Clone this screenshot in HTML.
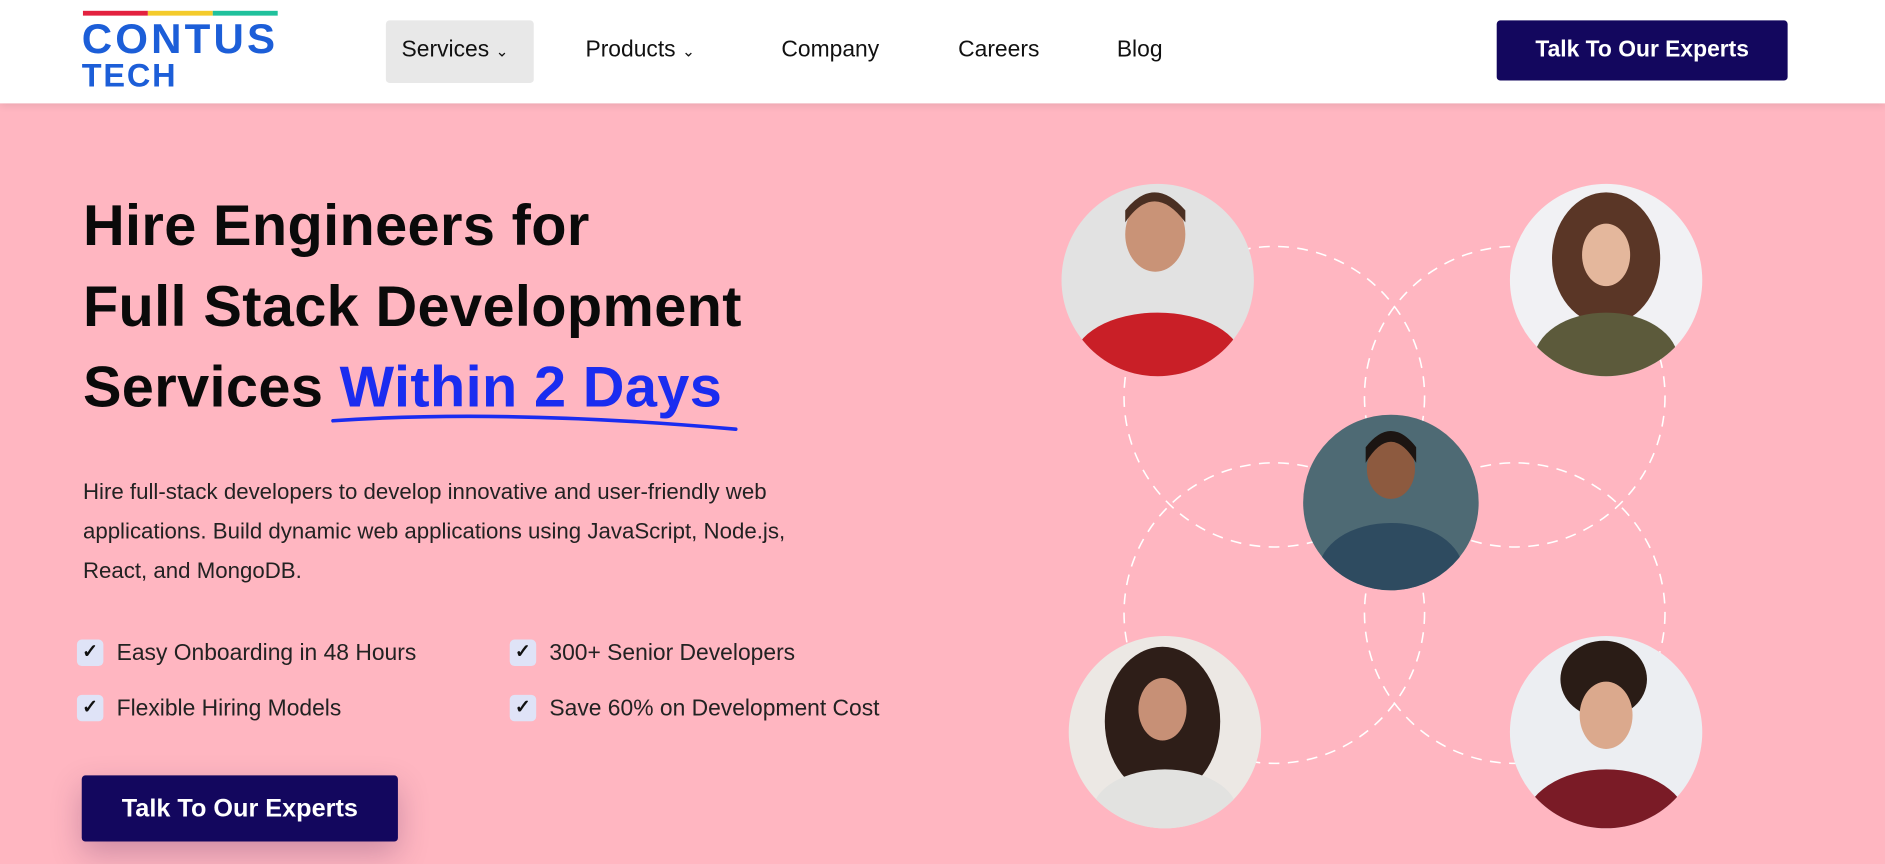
<!DOCTYPE html>
<html><head><meta charset="utf-8"><style>
*{margin:0;padding:0;box-sizing:border-box}
html,body{width:1885px;height:864px;overflow:hidden;background:#ffb6c1}
#w{width:1568px;height:719px;transform:scale(1.20217);transform-origin:0 0;position:relative;font-family:"Liberation Sans",sans-serif;background:#ffb6c1}
.nav{position:absolute;left:0;top:0;width:1568px;height:86px;background:#fff;box-shadow:0 2px 6px rgba(0,0,0,.08)}
.a{position:absolute}
.nl{position:absolute;top:31px;font-size:19px;color:#111}
.btn{position:absolute;background:#13075e;color:#fff;font-weight:bold;display:flex;align-items:center;justify-content:center;border-radius:3px}
h1{position:absolute;left:69px;top:155px;font-size:48px;line-height:67px;font-weight:bold;color:#0a0a0a;letter-spacing:0.3px}
.p{position:absolute;left:69px;top:392px;width:640px;font-size:18.5px;line-height:33px;color:#222}
.ck{position:absolute;width:22px;height:22px;background:#dfe3f7;border-radius:4px;font-size:16px;font-weight:bold;text-align:center;line-height:22px;color:#111}
.ct{position:absolute;font-size:19px;color:#222}
</style></head><body><div id="w">
<div class="nav">
 <div class="a" style="left:69px;top:9px;width:54px;height:4px;background:#e3213f"></div>
 <div class="a" style="left:123px;top:9px;width:54px;height:4px;background:#f4cb2b"></div>
 <div class="a" style="left:177px;top:9px;width:54px;height:4px;background:#1fc19c"></div>
 <div class="a" style="left:68px;top:14px;font-size:35px;font-weight:bold;color:#1c5ed8;letter-spacing:2.6px;line-height:38px">CONTUS</div>
 <div class="a" style="left:68px;top:48px;font-size:27px;font-weight:bold;color:#1c5ed8;letter-spacing:1.5px;line-height:30px">TECH</div>
 <div class="a" style="left:321px;top:17px;width:123px;height:52px;background:#e8e8e8;border-radius:3px"></div>
 <div class="nl" style="left:334px">Services <span style="font-size:13px">&#8964;</span></div>
 <div class="nl" style="left:487px">Products <span style="font-size:13px">&#8964;</span></div>
 <div class="nl" style="left:650px">Company</div>
 <div class="nl" style="left:797px">Careers</div>
 <div class="nl" style="left:929px">Blog</div>
 <div class="btn" style="left:1245px;top:17px;width:242px;height:50px;font-size:19px">Talk To Our Experts</div>
</div>
<h1>Hire Engineers for<br>Full Stack Development<br>Services <span style="color:#1a2cf0">Within 2 Days</span></h1>
<svg class="a" style="left:270px;top:340px" width="350" height="25"><path d="M7 10 Q 150 0 342 17" stroke="#1a2cf0" stroke-width="3" fill="none" stroke-linecap="round"/></svg>
<div class="p">Hire full-stack developers to develop innovative and user-friendly web applications. Build dynamic web applications using JavaScript, Node.js, React, and MongoDB.</div>
<div class="ck" style="left:64px;top:532px">✓</div><div class="ct" style="left:97px;top:533px">Easy Onboarding in 48 Hours</div>
<div class="ck" style="left:424px;top:532px">✓</div><div class="ct" style="left:457px;top:533px">300+ Senior Developers</div>
<div class="ck" style="left:64px;top:578px">✓</div><div class="ct" style="left:97px;top:579px">Flexible Hiring Models</div>
<div class="ck" style="left:424px;top:578px">✓</div><div class="ct" style="left:457px;top:579px">Save 60% on Development Cost</div>
<div class="btn" style="left:68px;top:645px;width:263px;height:55px;font-size:21px;box-shadow:0 10px 25px rgba(60,20,80,.25)">Talk To Our Experts</div>
<svg class="a" style="left:0;top:0" width="1568" height="719">
 <g fill="none" stroke="#fff" stroke-width="1.3" stroke-dasharray="9 7">
  <circle cx="1060" cy="330" r="125"/><circle cx="1260" cy="330" r="125"/>
  <circle cx="1060" cy="510" r="125"/><circle cx="1260" cy="510" r="125"/>
 </g>
 <defs>
  <clipPath id="c1"><circle cx="963" cy="233" r="80"/></clipPath>
  <clipPath id="c2"><circle cx="1336" cy="233" r="80"/></clipPath>
  <clipPath id="c3"><circle cx="1157" cy="418" r="73"/></clipPath>
  <clipPath id="c4"><circle cx="969" cy="609" r="80"/></clipPath>
  <clipPath id="c5"><circle cx="1336" cy="609" r="80"/></clipPath>
 </defs>
 <g clip-path="url(#c1)"><rect x="880" y="150" width="170" height="170" fill="#e2e2e2"/>
  <ellipse cx="963" cy="300" rx="70" ry="40" fill="#c91f27"/><ellipse cx="961" cy="195" rx="25" ry="31" fill="#c99377"/><path d="M936 185 Q960 150 986 185 L986 175 Q960 145 936 175Z" fill="#4a2f22"/></g>
 <g clip-path="url(#c2)"><rect x="1250" y="150" width="170" height="170" fill="#f1f1f4"/>
  <ellipse cx="1336" cy="215" rx="45" ry="55" fill="#5a3626"/><ellipse cx="1336" cy="300" rx="60" ry="40" fill="#5c5a3b"/><ellipse cx="1336" cy="212" rx="20" ry="26" fill="#e4b79c"/></g>
 <g clip-path="url(#c3)"><rect x="1080" y="340" width="160" height="160" fill="#4e6a74"/>
  <ellipse cx="1157" cy="475" rx="60" ry="40" fill="#2e4b60"/><ellipse cx="1157" cy="390" rx="20" ry="25" fill="#8d5a3f"/><path d="M1136 385 Q1157 350 1178 385 L1178 372 Q1157 345 1136 372Z" fill="#1c1512"/></g>
 <g clip-path="url(#c4)"><rect x="885" y="525" width="170" height="170" fill="#ece8e4"/>
  <ellipse cx="967" cy="600" rx="48" ry="62" fill="#2e1e18"/><ellipse cx="969" cy="675" rx="60" ry="35" fill="#e2e2e0"/><ellipse cx="967" cy="590" rx="20" ry="26" fill="#c79076"/></g>
 <g clip-path="url(#c5)"><rect x="1250" y="525" width="170" height="170" fill="#eceef2"/>
  <ellipse cx="1336" cy="685" rx="68" ry="45" fill="#7a1b26"/><ellipse cx="1334" cy="565" rx="36" ry="32" fill="#2a1c16"/><ellipse cx="1336" cy="595" rx="22" ry="28" fill="#dba98d"/></g>
</svg>
</div></body></html>
